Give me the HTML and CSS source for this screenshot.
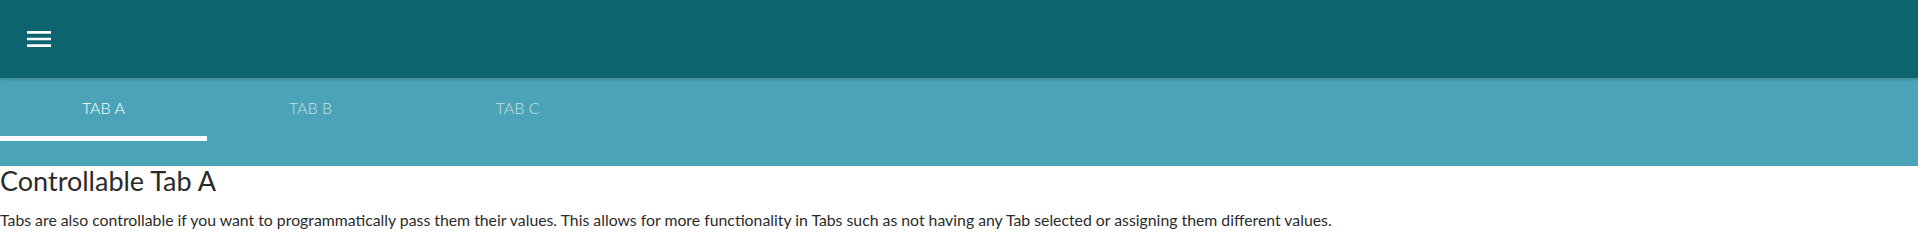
FILE: index.html
```html
<!DOCTYPE html>
<html>
<head>
<meta charset="utf-8">
<link rel="stylesheet" href="styles.css">
</head>
<body>
<header class="appbar">
  <button class="menu-btn" aria-label="menu">
    <svg viewBox="0 0 24 24" width="32" height="32"><path fill="#fff" d="M3 18h18v-2H3v2zm0-5h18v-2H3v2zm0-7v2h18V6H3z"/></svg>
  </button>
</header>
<nav class="tabbar">
  <div class="tabs">
    <div class="tab active">TAB A</div>
    <div class="tab">TAB B</div>
    <div class="tab">TAB C</div>
  </div>
  <div class="indicator-row"><div class="indicator"></div></div>
</nav>
<main class="content">
  <h2 class="title">Controllable Tab A</h2>
  <p class="text">Tabs are also controllable if you want to programmatically pass them their values. This allows for more functionality in Tabs such as not having any Tab selected or assigning them different values.</p>
</main>
</body>
</html>
```
FILE: styles.css
```css
html, body {
  margin: 0;
  padding: 0;
  background: #fff;
  font-family: "Lato", "Open Sans", sans-serif;
}
.appbar {
  height: 78px;
  background: #0b6470;
  display: flex;
  align-items: center;
  box-shadow: 0 1px 3px rgba(0,0,0,0.25);
  position: relative;
  z-index: 1;
}
.menu-btn {
  margin-left: 23px;
  padding: 0;
  border: 0;
  background: transparent;
  width: 32px;
  height: 32px;
  display: flex;
}
.tabbar {
  background: #4aa3b7;
  padding-bottom: 25px;
}
.tabs {
  display: flex;
  height: 58px;
}
.tab {
  width: 207px;
  display: flex;
  align-items: center;
  justify-content: center;
  font-size: 16px;
  font-weight: 300;
  color: rgba(255,255,255,0.7);
}
.tab.active {
  color: #fff;
}
.indicator-row {
  height: 5px;
}
.indicator {
  width: 207px;
  height: 5px;
  background: #fff;
}
.content {
  color: #2b2b2b;
}
.title {
  margin: 0;
  font-weight: 400;
  font-size: 27px;
  line-height: 30px;
}
.text {
  margin: 12px 0 0;
  font-size: 15.8px;
  line-height: 24px;
}
```
